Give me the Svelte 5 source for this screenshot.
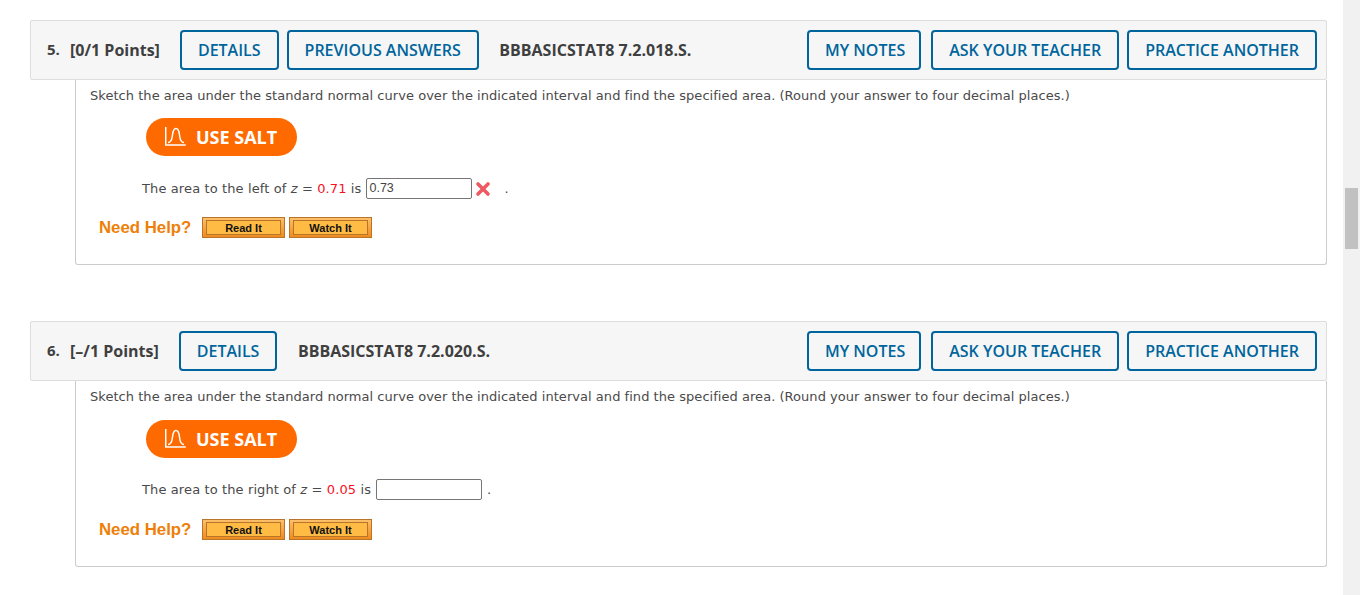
<script>
  const questions = [
    {
      num: '5.',
      points: '[0/1 Points]',
      prev: true,
      code: 'BBBASICSTAT8 7.2.018.S.',
      side: 'left',
      z: '0.71',
      value: '0.73',
      wrong: true
    },
    {
      num: '6.',
      points: '[–/1 Points]',
      prev: false,
      code: 'BBBASICSTAT8 7.2.020.S.',
      side: 'right',
      z: '0.05',
      value: '',
      wrong: false
    }
  ];
</script>

<div class="page">
  <main class="content">
    {#each questions as q}
      <section class="question" class:answered={q.wrong}>
        <header class="head">
          <span class="num">{q.num}</span>
          <span class="points">{q.points}</span>
          <button class="btn first">DETAILS</button>
          {#if q.prev}<button class="btn prev">PREVIOUS ANSWERS</button>{/if}
          <span class="code">{q.code}</span>
          <div class="right">
            <button class="btn notes">MY NOTES</button>
            <button class="btn">ASK YOUR TEACHER</button>
            <button class="btn">PRACTICE ANOTHER</button>
          </div>
        </header>
        <div class="body">
          <p class="prompt">Sketch the area under the standard normal curve over the indicated interval and find the specified area. (Round your answer to four decimal places.)</p>
          <button class="salt">
            <svg width="22" height="20" viewBox="0 0 22 20" fill="none" stroke="#fff" stroke-width="1.5">
              <path d="M1.75 0v18h20" />
              <path d="M4 15.5C7 15.5 8 13 8.5 8 9 3.5 10 1.5 12 1.5S15 3.5 15.5 8C16 13 17 15.5 20 15.5" />
            </svg>
            USE SALT
          </button>
          <div class="answer">
            <span class="sentence">The area to the {q.side} of <i>z</i> = <span class="red">{q.z}</span> is</span>
            <input class="box" type="text" value={q.value} />
            {#if q.wrong}
              <svg class="cross" width="16" height="16" viewBox="0 0 16 16">
                <path d="M3 3l10 10M13 3L3 13" stroke="#ee5a62" stroke-width="3.6" stroke-linecap="round" />
              </svg>
              <span class="dot wrong">.</span>
            {:else}
              <span class="dot">.</span>
            {/if}
          </div>
          <div class="help">
            <span class="need">Need Help?</span>
            <button class="help-btn"><span>Read It</span></button>
            <button class="help-btn"><span>Watch It</span></button>
          </div>
        </div>
      </section>
    {/each}
  </main>
  <div class="scrollbar"><div class="thumb"></div></div>
</div>

<style>
  :global(body) {
    margin: 0;
    background: #fff;
    overflow: hidden;
  }
  .page {
    display: flex;
    height: 595px;
    overflow: hidden;
  }
  .content {
    flex: 1;
    padding: 20px 16px 0 30px;
    min-width: 0;
  }
  .question {
    margin-bottom: 56px;
  }
  .head {
    display: flex;
    align-items: center;
    box-sizing: border-box;
    height: 60px;
    padding: 0 9px 0 16px;
    background: #f6f6f6;
    border: 1px solid #ddd;
    border-radius: 2px;
    font-family: "Open Sans", sans-serif;
    color: #3f3f3f;
  }
  .num {
    font-size: 15px;
    font-weight: 700;
    width: 23px;
    margin-top: -2px;
  }
  .points {
    font-size: 16px;
    font-weight: 700;
    margin-right: 20px;
  }
  .btn {
    box-sizing: border-box;
    height: 40px;
    padding: 0 16px;
    background: transparent;
    border: 2px solid #00659c;
    border-radius: 4px;
    color: #00659c;
    font-family: "Open Sans", sans-serif;
    font-size: 16px;
    font-weight: 600;
    white-space: nowrap;
  }
  .first {
    padding: 0 16px;
  }
  .prev {
    margin-left: 8px;
  }
  .notes {
    padding: 0 14px 0 16px;
    margin-right: 2px;
  }
  .code {
    margin-left: 20.5px;
    font-size: 16px;
    font-weight: 700;
    white-space: nowrap;
  }
  .right {
    margin-left: auto;
    display: flex;
    gap: 8px;
  }
  .body {
    box-sizing: border-box;
    height: 185px;
    margin-left: 45px;
    padding: 8px 0 0 14px;
    border: 1px solid #ccc;
    border-top: 0;
    border-radius: 0 0 3px 3px;
    font-family: "DejaVu Sans", sans-serif;
    font-size: 13px;
    color: #4a4a4a;
  }
  .question:not(.answered) .body {
    height: 186px;
  }
  .prompt {
    margin: 0;
    line-height: 16px;
    letter-spacing: 0.04px;
  }
  .salt {
    display: flex;
    align-items: center;
    gap: 10px;
    box-sizing: border-box;
    width: 151px;
    height: 38px;
    margin: 14px 0 0 56px;
    padding: 0 0 0 18px;
    background: #ff6a00;
    border: 0;
    border-radius: 19px;
    color: #fff;
    font-family: "Open Sans", sans-serif;
    font-size: 18px;
    font-weight: 700;
  }
  .question:not(.answered) .salt {
    margin-top: 15px;
  }
  .answer {
    display: flex;
    align-items: center;
    gap: 5px;
    height: 22px;
    margin: 21px 0 0 52px;
  }
  .question:not(.answered) .answer {
    margin-top: 20px;
  }
  .sentence {
    white-space: nowrap;
    letter-spacing: 0.115px;
  }
  .red {
    color: #f5121f;
  }
  .box {
    box-sizing: border-box;
    width: 106px;
    height: 21px;
    margin: 0;
    padding: 0 2px;
    border: 1px solid #767676;
    border-radius: 2px;
    background: #fff;
    font-family: "Liberation Sans", sans-serif;
    font-size: 12.5px;
    color: #444;
  }
  .cross {
    margin-top: 2px;
    margin-left: -2px;
  }
  .dot {
    margin-left: 0;
  }
  .dot.wrong {
    margin-left: 8px;
  }
  .help {
    display: flex;
    align-items: center;
    height: 22px;
    margin: 17px 0 0 9px;
    font-family: "Liberation Sans", sans-serif;
  }
  .question:not(.answered) .help {
    margin-top: 18px;
  }
  .need {
    color: #ee7f08;
    font-size: 16.8px;
    font-weight: 700;
    width: 103px;
    margin-top: 2px;
  }
  .help-btn {
    box-sizing: border-box;
    width: 83px;
    height: 21px;
    margin: 0 4px 0 0;
    padding: 2px 3px;
    background: linear-gradient(#fcc06a, #f08b1d);
    border: 1px solid #b8742a;
  }
  .help-btn span {
    display: block;
    height: 100%;
    box-sizing: border-box;
    background: #ffbb44;
    border: 1px solid #b8742a;
    color: #111;
    font-family: "Liberation Sans", sans-serif;
    font-size: 11px;
    font-weight: 700;
    line-height: 15px;
  }
  .scrollbar {
    flex: none;
    width: 17px;
    background: #f1f1f1;
  }
  .thumb {
    width: 13px;
    height: 61px;
    margin: 188px 0 0 2px;
    background: #c1c1c1;
  }
</style>
